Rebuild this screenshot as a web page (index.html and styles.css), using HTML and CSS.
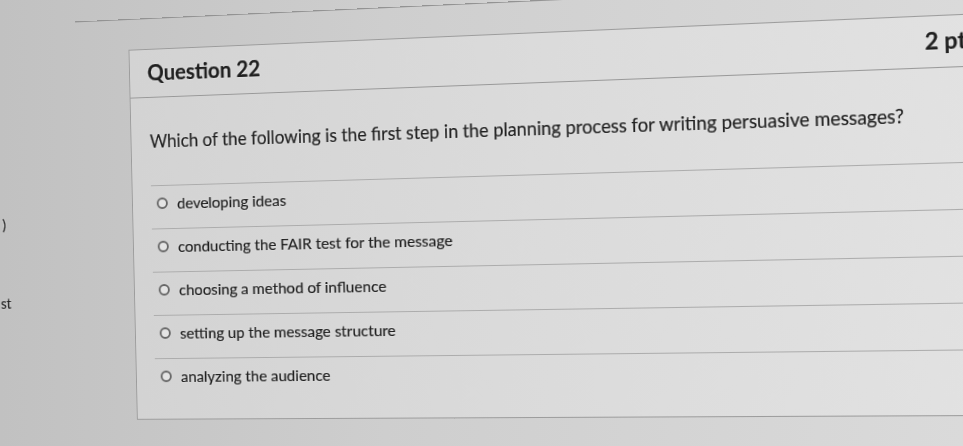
FILE: index.html
```html
<!DOCTYPE html>
<html lang="en">
<head>
    <meta charset="UTF-8">
    <meta name="viewport" content="width=device-width, initial-scale=1.0">
    <title>Question 22</title>
    <link rel="stylesheet" href="styles.css">
</head>
<body>

<div class="screen">
    <aside class="sidebar">
        <div class="side-item side-item-1">)</div>
        <div class="side-item side-item-2">st</div>
    </aside>

    <main class="main">
        <div class="question">
            <div class="question-header">
                <h2 class="question-name">Question 22</h2>
                <span class="question-points">2 pts</span>
            </div>
            <div class="question-body">
                <p class="question-text">Which of the following is the first step in the planning process for writing persuasive messages?</p>
                <div class="answers">
                    <label class="answer"><span class="radio"></span>developing ideas</label>
                    <label class="answer"><span class="radio"></span>conducting the FAIR test for the message</label>
                    <label class="answer"><span class="radio"></span>choosing a method of influence</label>
                    <label class="answer"><span class="radio"></span>setting up the message structure</label>
                    <label class="answer"><span class="radio"></span>analyzing the audience</label>
                </div>
            </div>
        </div>
    </main>
</div>

</body>
</html>
```

FILE: styles.css
```css
html, body {
    margin: 0;
    height: 100%;
    overflow: hidden;
}
body {
    font-family: Lato, "Noto Sans", sans-serif;
    color: #1f1f1f;
    background: linear-gradient(90deg, #c1c1c1, #cecece 40%, #dadada);
}

/* the photo is taken at an angle, so the whole screen is tilted a bit */
.screen {
    display: flex;
    width: 1100px;
    height: 446px;
    margin-left: -60px;
    transform-origin: 605px 235px;
    transform: rotate(-1.3deg) perspective(1000px) rotateY(-5.7deg);
    text-shadow: 0 0 2px rgba(255, 255, 255, 0.7);
    -webkit-text-stroke: 0.2px #1f1f1f;
}

.sidebar {
    width: 115px;
    flex-shrink: 0;
    box-sizing: border-box;
    padding: 201px 78px 0 0;
    font-size: 15px;
}
.side-item {
    line-height: 20px;
    text-align: right;
    white-space: nowrap;
}
.side-item-1 {
    margin-right: 4px;
}
.side-item-2 {
    margin-top: 63px;
}

.main {
    flex: 1;
    border-top: 1px solid #939393;
}

.question {
    width: 869px;
    margin: 31px 0 0 58px;
    box-sizing: border-box;
    border: 1px solid #9c9c9c;
    background: linear-gradient(90deg, #d3d3d3, #dbdbdb 50%, #e2e2e2);
}
.question-header {
    display: flex;
    justify-content: space-between;
    align-items: center;
    height: 50px;
    box-sizing: border-box;
    padding: 0 16px 3px 19px;
    border-bottom: 1px solid #999;
}
.question-name, .question-points {
    margin: 0;
    font-size: 22px;
    font-weight: 700;
}

.question-body {
    padding: 0 21px 18px 20px;
}
.question-text {
    margin: 33px 0 34px;
    font-size: 18.3px;
    line-height: 24px;
}

.answer {
    display: flex;
    align-items: center;
    gap: 10px;
    height: 45px;
    box-sizing: border-box;
    padding: 0 0 9px 6px;
    border-top: 1px solid #acacac;
    font-size: 16px;
}
.radio {
    width: 12px;
    height: 12px;
    box-sizing: border-box;
    border: 2px solid #666;
    border-radius: 50%;
    background: #e4e4e4;
    flex-shrink: 0;
}
```
